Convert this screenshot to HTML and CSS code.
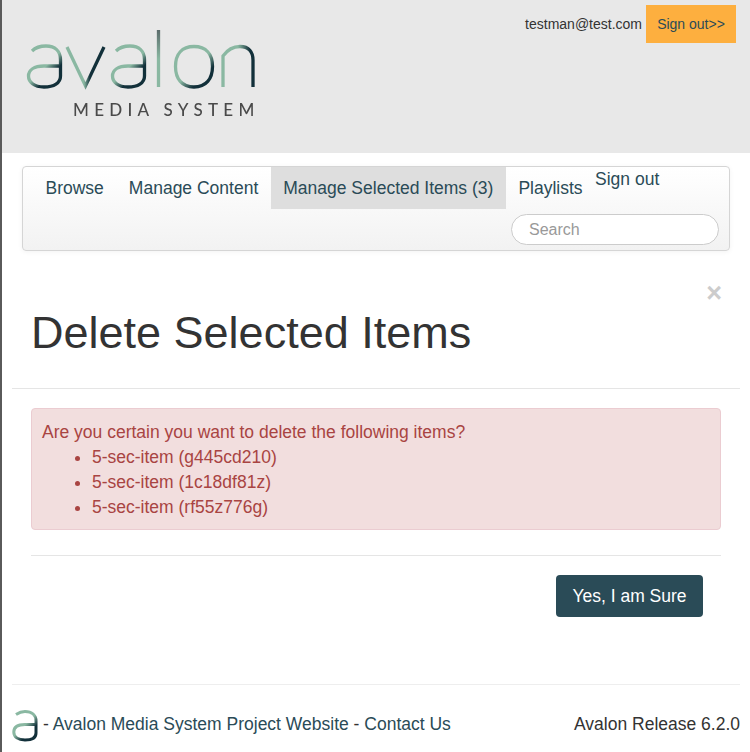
FILE: index.html
```html
<!DOCTYPE html>
<html lang="en">
<head>
<meta charset="utf-8">
<title>Delete Selected Items</title>
<link rel="stylesheet" href="styles.css">
</head>
<body>
<div class="page">
  <header class="masthead">
    <svg class="logo" width="260" height="125" viewBox="0 0 260 125" role="img" aria-label="Avalon Media System">
      <defs>
        <linearGradient id="ga" gradientUnits="userSpaceOnUse" x1="49" y1="63" x2="56" y2="70"><stop offset="0" stop-color="#8ab8a2"/><stop offset="1" stop-color="#12303a"/></linearGradient>
        <linearGradient id="gb" gradientUnits="userSpaceOnUse" x1="133" y1="63" x2="140" y2="70"><stop offset="0" stop-color="#8ab8a2"/><stop offset="1" stop-color="#12303a"/></linearGradient>
        <linearGradient id="gv" gradientUnits="userSpaceOnUse" x1="84" y1="0" x2="90" y2="0"><stop offset="0" stop-color="#8ab8a2"/><stop offset="1" stop-color="#12303a"/></linearGradient>
        <linearGradient id="gl" gradientUnits="userSpaceOnUse" x1="0" y1="30" x2="0" y2="88"><stop offset="0" stop-color="#5b6b6b"/><stop offset=".5" stop-color="#8ab8a2"/></linearGradient>
        <linearGradient id="go" gradientUnits="userSpaceOnUse" x1="190" y1="72" x2="199" y2="81"><stop offset="0" stop-color="#8ab8a2"/><stop offset="1" stop-color="#12303a"/></linearGradient>
        <linearGradient id="gn" gradientUnits="userSpaceOnUse" x1="238" y1="0" x2="250" y2="0"><stop offset="0" stop-color="#8ab8a2"/><stop offset="1" stop-color="#12303a"/></linearGradient>
      </defs>
      <g fill="none" stroke-width="3.300" transform="translate(-7 0)">
        <path stroke="url(#ga)" d="M32 51C36 47 41 46 46 46C55 46 60.500 51 60.500 60V76C60.500 83 54 87 44 87C34 87 28.500 82 28.500 76C28.500 70 34 66 44 66H60.500"/>
        <path stroke="url(#gv)" d="M67 47L85.500 86L104 47"/>
        <path stroke="url(#gb)" d="M116 51C120 47 125 46 130 46C139 46 144.500 51 144.500 60V76C144.500 83 138 87 128 87C118 87 112.500 82 112.500 76C112.500 70 118 66 128 66H144.500"/>
        <path stroke="url(#gl)" d="M158.500 30V87"/>
        <path stroke="url(#go)" d="M194 46.500C206 46.500 212.500 54 212.500 66.500C212.500 79 206 87 194 87C182 87 175.500 79 175.500 66.500C175.500 54 182 46.500 194 46.500Z"/>
        <path stroke="url(#gn)" d="M223 87V56C228 49 234 46.500 240 46.500C249 46.500 253 52 253 60V87"/>
      </g>
      <text class="logo-sub" x="66" y="116">MEDIA SYSTEM</text>
    </svg>
    <div class="user-box">
      <span class="user-email">testman@test.com</span>
      <a class="signout-btn" href="#">Sign out&gt;&gt;</a>
    </div>
  </header>

  <nav class="navbar">
    <ul class="menu">
      <li class="menu-item">Browse</li>
      <li class="menu-item">Manage Content</li>
      <li class="menu-item is-active">Manage Selected Items (3)</li>
      <li class="menu-item">Playlists</li>
    </ul>
    <a class="nav-signout" href="#">Sign out</a>
    <input class="search" type="text" placeholder="Search">
  </nav>

  <main class="dialog">
    <div class="dialog-head">
      <div class="close-row"><span class="close">×</span></div>
      <h1 class="title">Delete Selected Items</h1>
    </div>
    <div class="dialog-body">
      <div class="alert">
        Are you certain you want to delete the following items?
        <ul class="alert-list">
          <li>5-sec-item (g445cd210)</li>
          <li>5-sec-item (1c18df81z)</li>
          <li>5-sec-item (rf55z776g)</li>
        </ul>
      </div>
      <div class="actions">
        <button class="confirm" type="button">Yes, I am Sure</button>
      </div>
    </div>
  </main>

  <footer class="footer">
    <div class="footer-left">
      <svg class="mini-logo" width="26" height="32" viewBox="0 0 26 32" aria-hidden="true">
        <defs>
          <linearGradient id="gm" gradientUnits="userSpaceOnUse" x1="11" y1="17" x2="17" y2="23"><stop offset="0" stop-color="#8ab8a2"/><stop offset="1" stop-color="#12303a"/></linearGradient>
        </defs>
        <path fill="none" stroke="url(#gm)" stroke-width="3" d="M4 4.500C7 2.500 10 1.500 13 1.500C20 1.500 24 5.500 24 11V23C24 28 19 30 13 30C6 30 1.800 27 1.800 22C1.800 17 6 14.500 13 14.500H24"/>
      </svg>
      <span class="footer-links">- <a href="#">Avalon Media System Project Website</a> - <a href="#">Contact Us</a></span>
    </div>
    <div class="release">Avalon Release 6.2.0</div>
  </footer>
</div>
</body>
</html>
```

FILE: styles.css
```css
* { box-sizing: border-box; }
html, body { margin: 0; padding: 0; }
body {
  font-family: "Liberation Sans", Arial, sans-serif;
  font-size: 17.500px;
  line-height: 25px;
  color: #333;
  background: #fff;
}
a { color: #2a4b57; text-decoration: none; }
.page {
  height: 752px;
  overflow: hidden;
  border-left: 2px solid #5a5a5a;
}
.masthead {
  height: 153px;
  background: #e8e8e8;
  display: flex;
  justify-content: space-between;
  align-items: flex-start;
}
.logo { display: block; margin: 0 0 0 5px; filter: blur(.35px); }
.logo-sub {
  font-family: Lato, sans-serif;
  font-size: 17px;
  font-weight: 500;
  letter-spacing: 5.300px;
  fill: #4a4a4a;
}
.user-box {
  display: flex;
  align-items: center;
  margin: 5px 14px 0 0;
  gap: 4px;
  font-size: 14px;
}
.signout-btn {
  display: block;
  width: 90px;
  height: 38px;
  line-height: 38px;
  text-align: center;
  background: #fdaf3f;
  color: #2a4b57;
}
.navbar {
  margin: 13px 20px 0 20px;
  height: 85px;
  border: 1px solid #d5d5d5;
  border-radius: 4px;
  background: linear-gradient(to bottom, #fff, #f2f2f2);
  box-shadow: 0 1px 5px rgba(0,0,0,.05);
  padding-left: 10px;
  display: grid;
  grid-template-columns: auto 1fr;
  grid-template-rows: 42px auto;
}
.menu {
  list-style: none;
  margin: 0;
  padding: 0;
  display: flex;
}
.menu-item {
  padding: 9px 12.500px 8px;
  color: #2a4b57;
  white-space: nowrap;
}
.is-active { background: #dedede; }
.nav-signout { line-height: 25px; }
.search {
  grid-column: 1 / -1;
  justify-self: end;
  width: 208px;
  height: 31px;
  margin: 5px 10px 0 0;
  padding: 0 17px;
  border: 1px solid #ccc;
  border-radius: 16px;
  background: #fff;
  font: 16px "Liberation Sans", Arial, sans-serif;
  color: #555;
}
.search::placeholder { color: #999; opacity: 1; }
.dialog { margin-left: 10px; margin-right: 10px; }
.dialog-head {
  padding: 32px 18px 32px 20px;
  border-bottom: 1px solid #e5e5e5;
}
.close-row { display: flex; justify-content: flex-end; height: 27px; }
.close {
  font-size: 27px;
  font-weight: 700;
  line-height: 20px;
  color: #ccc;
}
.title {
  margin: 0 0 0 -1px;
  font-size: 45px;
  font-weight: 400;
  line-height: 46px;
  color: #333;
}
.dialog-body { padding: 19px 19px 0; }
.alert {
  padding: 11px 10px 10px;
  height: 122px;
  background: #f2dede;
  border: 1px solid #ebccd1;
  border-radius: 4px;
  color: #a94442;
}
.alert-list { margin: 0; padding-left: 50px; }
.actions {
  margin-top: 25px;
  padding: 19px 18px 0;
  border-top: 1px solid #e5e5e5;
  display: flex;
  justify-content: flex-end;
}
.confirm {
  width: 147px;
  height: 42px;
  background: #2a4b57;
  color: #fff;
  border: 0;
  border-radius: 4px;
  font: 17.500px "Liberation Sans", Arial, sans-serif;
}
.footer {
  margin: 67px 10px 0 10px;
  border-top: 1px solid #eee;
  display: flex;
  justify-content: space-between;
  padding-top: 25px;
}
.footer-left { display: flex; align-items: flex-start; }
.mini-logo { display: block; margin-right: 5px; flex: none; }
.footer-links { color: #333; padding-top: 2px; }
.release { color: #333; padding-top: 2px; }
```
